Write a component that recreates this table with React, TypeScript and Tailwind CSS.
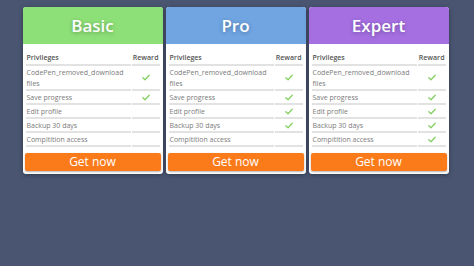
const plans = [
  { name: "Basic", header: "bg-[#8ddf78]", checks: [true, true, false, false, false] },
  { name: "Pro", header: "bg-[#70a5e2]", checks: [true, true, true, true, false] },
  { name: "Expert", header: "bg-[#a56fe1]", checks: [true, true, true, true, true] },
];

const privileges = ["CodePen_removed_download files", "Save progress", "Edit profile", "Backup 30 days", "Compitition access"];

function Check() {
  return (
    <svg width="8" height="7" viewBox="0 0 10 8" fill="none">
      <path d="M1 4.2 L3.8 6.8 L9 1.2" stroke="#84d062" strokeWidth="1.6" strokeLinecap="round" strokeLinejoin="round" />
    </svg>
  );
}

export default function App() {
  return (
    <div className="min-h-[266px] w-full bg-[#4a5571] pt-[7px] font-['Open_Sans',sans-serif]">
      <div className="flex justify-center gap-[3px] pr-[3px]">
        {plans.map((p) => (
          <div key={p.name} className="w-[140px] h-[167px] bg-white rounded-[3px] overflow-hidden shadow-[0_1px_4px_rgba(0,0,0,0.35)] flex flex-col">
            <div className={`${p.header} h-[37px] shrink-0 flex items-center justify-center text-white text-[17px] font-semibold [text-shadow:0_1px_4px_rgba(0,0,0,0.3)]`}>
              {p.name}
            </div>
            <div className="px-[3px] pt-[8px] text-[7px] leading-[11px] text-[#7a7a7a]">
              <div className="grid grid-cols-[minmax(0,1fr)_28px] gap-x-[1px]">
                <div className="border-b-2 border-[#e2e2e2] pb-[1px] pl-[1px] font-semibold text-[#555]">Privileges</div>
                <div className="border-b-2 border-[#e2e2e2] pb-[1px] text-right pr-[1px] font-semibold text-[#555]">Reward</div>
                {privileges.map((t, i) => (
                  <>
                    <div key={t} className="border-b-2 border-[#e2e2e2] pt-[1px] pl-[1px] pr-[4px]">{t}</div>
                    <div key={t + "r"} className="border-b-2 border-[#e2e2e2] flex items-center justify-center">
                      {p.checks[i] && <Check />}
                    </div>
                  </>
                ))}
              </div>
            </div>
            <button className="mx-[2px] mt-auto mb-[3px] h-[18px] shrink-0 rounded-[2px] bg-[#fb7b1b] text-white text-[12px] font-medium shadow-[0_1px_2px_rgba(0,0,0,0.3)]">
              Get now
            </button>
          </div>
        ))}
      </div>
    </div>
  );
}
